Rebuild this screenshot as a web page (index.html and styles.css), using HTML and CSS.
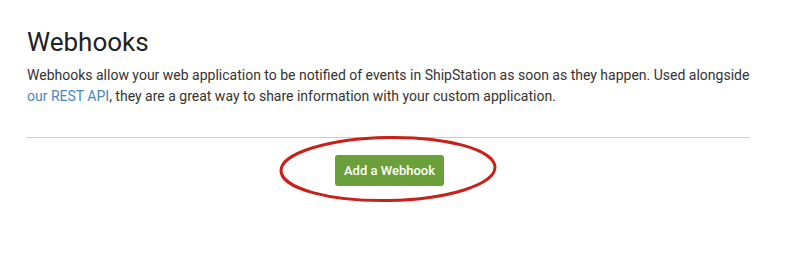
FILE: index.html
```html
<!DOCTYPE html>
<html>
<head>
<meta charset="utf-8">
<link rel="stylesheet" href="styles.css">
</head>
<body>
<div class="page">
  <h1 class="title">Webhooks</h1>
  <p class="intro">Webhooks allow your web application to be notified of events in ShipStation as soon as they happen. Used alongside <a class="link" href="#">our REST API</a>, they are a great way to share information with your custom application.</p>
  <hr class="divider">
  <div class="actions">
    <button class="btn-add">Add a Webhook</button>
    <svg class="circle" width="230" height="80" viewBox="0 0 230 80" aria-hidden="true">
      <ellipse cx="115" cy="38" rx="107" ry="31.5" fill="none" stroke="#c8211a" stroke-width="3" transform="rotate(-1 115 38)"/>
    </svg>
  </div>
</div>
</body>
</html>
```

FILE: styles.css
```css
html, body {
  margin: 0;
  padding: 0;
  background: #fff;
}
body {
  font-family: Roboto, "Liberation Sans", Arial, sans-serif;
  color: #333;
  min-height: 280px;
}
.page {
  width: 723px;
  padding: 27px 0 60px 27px;
}
.title {
  margin: 0;
  font-size: 26px;
  font-weight: 400;
  line-height: 30px;
  color: #222;
}
.intro {
  margin: 8px 0 0;
  font-size: 14px;
  line-height: 21px;
  color: #333;
}
.link {
  color: #4a86c0;
  text-decoration: none;
}
.divider {
  margin: 30px 0 0;
  border: 0;
  border-top: 1px solid #ccc;
  height: 0;
}
.actions {
  position: relative;
  display: flex;
  justify-content: center;
  padding-top: 17px;
}
.btn-add {
  position: relative;
  left: 1px;
  width: 109px;
  height: 31px;
  border: 0;
  border-radius: 3px;
  background: #6a9f3a;
  color: #fff;
  font-family: Roboto, "Liberation Sans", Arial, sans-serif;
  font-size: 13px;
  font-weight: 500;
  padding: 0;
}
.circle {
  position: absolute;
  left: 246px;
  top: -7px;
  overflow: visible;
}
```
